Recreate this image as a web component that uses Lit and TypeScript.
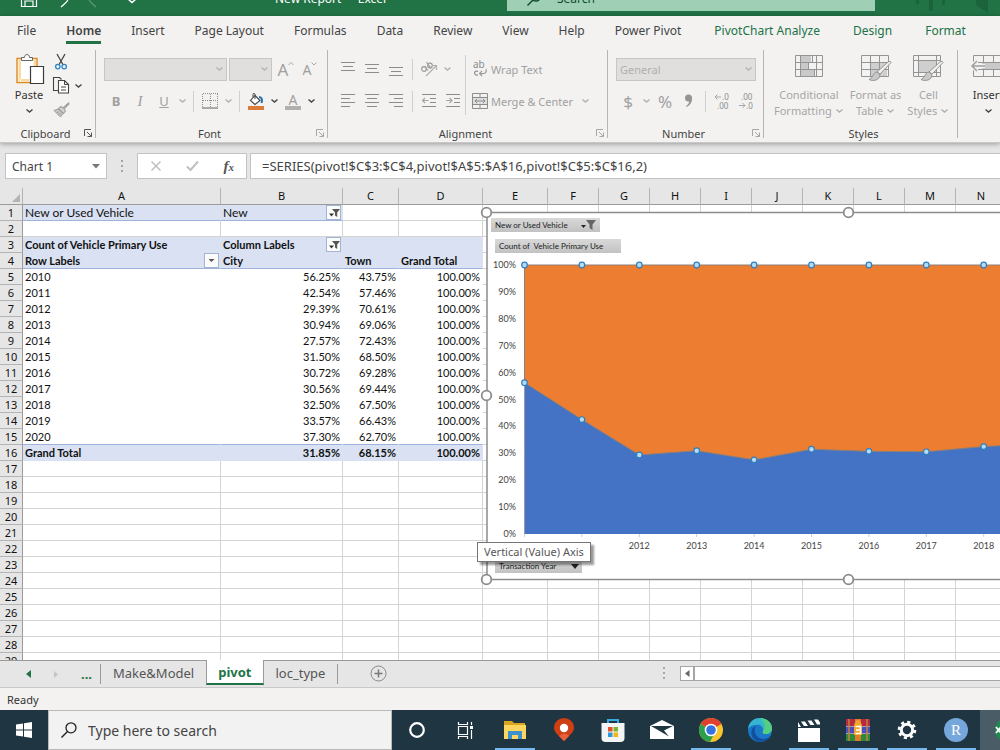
import { LitElement, html, css, svg, nothing, TemplateResult } from "lit";
import { customElement } from "lit/decorators.js";
import { classMap } from "lit/directives/class-map.js";

const GREY = "#a6a6a6";
const icon = (w: number, h: number, body: unknown) =>
  html`<svg class="ico" width=${w} height=${h} viewBox="0 0 ${w} ${h}" fill="none" aria-hidden="true">${body}</svg>`;

const chevron = (color = "#b0b0b0") =>
  icon(9, 6, svg`<path d="M1.5 1.5 4.5 4 7.5 1.5" stroke=${color} stroke-width="1.4"/>`);
const launcher = (color: string) =>
  icon(10, 10, svg`<path d="M1.5 8V1.5H8M4 4l4.5 4.5M8.5 4.5v4h-4" stroke=${color}/>`);
const lines = (ws: number[], align: "l" | "c" | "r", shift = 0) =>
  icon(16, 16, svg`${ws.map((w, i) => {
    const x = align === "l" ? 1 : align === "r" ? 15 - w : 8 - w / 2;
    return svg`<path d="M${x} ${(16 - (ws.length - 1) * 4) / 2 - 0.5 + shift + i * 4}h${w}" stroke="#8c8c8c"/>`;
  })}`);
const funnel = icon(12, 10, svg`<path d="M4 1h8L9.200 4.500V9L7 7.500V4.500Z" fill="#555"/><path d="M1 5.500h5L3.500 8.500Z" fill="#333"/>`);

const ICONS = {
  save: icon(18, 18, svg`<path d="M1.500 1.500h13l2 2v13h-15Z M5 16v-5h8v5 M5 2v5h7V2" stroke="#fff" stroke-width="1.200"/>`),
  undo: icon(18, 18, svg`<path d="M3 2v6h6M3 8c4-6 12-4 12 1 0 3-4 5-7 8" stroke="#fff" stroke-width="1.300"/>`),
  redo: icon(18, 18, svg`<path d="M15 2v6H9M15 8C11 2 3 4 3 9c0 3 4 5 7 8" stroke="#5b9876" stroke-width="1.300"/>`),
  search: icon(16, 16, svg`<circle cx="10" cy="5.500" r="4.500" stroke="#0e4a2a" stroke-width="1.300"/><path d="M7 9 1.500 14.500" stroke="#0e4a2a" stroke-width="1.400"/>`),
  paste: icon(32, 32, svg`<path d="M4 5.500h20v24H4Z" fill="#fff" stroke="#e08a1e" stroke-width="1.400"/><path d="M5.500 7v21h2.500V7Zm15 0h2.500v6h-2.500ZM7 26h9v2H7Z" fill="#fbd9a0"/><path d="M8.500 7.500v-3h3c0-4 5-4 5 0h3v3Z" fill="#f9f9f9" stroke="#666"/><path d="M17.500 13.500h13v17h-13Z" fill="#fff" stroke="#3b3b3b" stroke-width="1.200"/>`),
  cut: icon(14, 17, svg`<path d="M3 1l6.200 11M11 1 4.800 12" stroke="#444" stroke-width="1.300"/><circle cx="3.800" cy="13.600" r="2.200" stroke="#2b88c4" stroke-width="1.300"/><circle cx="10.200" cy="13.600" r="2.200" stroke="#2b88c4" stroke-width="1.300"/>`),
  copy: icon(18, 17, svg`<path d="M6.500 13.500h-5v-13h6l2 2" stroke="#444" stroke-width="1.100"/><path d="M6.500 3.500h6l4 4v8.500h-10Z" fill="#fff" stroke="#444" stroke-width="1.100"/><path d="M12.500 3.500v4h4M9 10h5M9 13h5" stroke="#444"/>`),
  brush: icon(17, 16, svg`<path d="M15.500 1 10 6 8 4.500 5.500 6.500l5 5 2-2.500-1.500-2L16 2Z" fill="#d5d5d5" stroke="#a0a0a0" stroke-width="1.100"/><path d="M5 7 1 8.500l6.500 6.500 2.500-3.500ZM3.500 11l2-1M5.500 13l2-1.500" fill="#c4c4c4" stroke="#a0a0a0"/>`),
  border: icon(16, 16, svg`<path d="M1 .5h15M1 7.500h15M.5 1v13M8.500 1v13M15.500 1v13" stroke="#8f8f8f" stroke-dasharray="1 1"/><path d="M0 15h16" stroke="#8a8a8a" stroke-width="1.400"/>`),
  fill: icon(18, 17, svg`<path d="M8 2.500 13 7.500 8 11.500 3.500 7.500Z" fill="#fff" stroke="#444" stroke-width="1.100"/><path d="M8 6V1.500c0-1.500-2-1.500-2 0v2.500" stroke="#444"/><path d="M12 4c3 0 3.500 3 2.500 6" stroke="#1f6fb5" stroke-width="2"/><path d="M1 13h16v4H1Z" fill="#d97b3a"/>`),
  orient: icon(18, 18, svg`<circle cx="4" cy="9" r="2.300" stroke="#9c9c9c" stroke-width="1.200"/><path d="M4.500 6 8 10.500M6.500 2 11 8.500" stroke="#9c9c9c" stroke-width="1.200"/><circle cx="10" cy="5.500" r="2.300" stroke="#9c9c9c" stroke-width="1.200"/><path d="M6 16 16 6M12 5.500h4.500V10" stroke="#b0b0b0" stroke-width="1.200"/>`),
  indentL: icon(16, 16, svg`<path d="M1 1.500h14M9 5.500h6M9 9.500h6M1 13.500h14" stroke="#8c8c8c"/><path d="M7.500 7.500H2M4 5 1.500 7.500 4 10" stroke="#a6a6a6" stroke-width="1.200"/>`),
  indentR: icon(16, 16, svg`<path d="M1 1.500h14M9 5.500h6M9 9.500h6M1 13.500h14" stroke="#8c8c8c"/><path d="M1 7.500h5.500M4.500 5 7 7.500 4.500 10" stroke="#a6a6a6" stroke-width="1.200"/>`),
  wrap: icon(16, 18, svg`<text x="1" y="8" font-size="10" fill="#8c8c8c">ab</text><path d="M6 11.500c-4-2-5 4.500 0 3.500" stroke="#8c8c8c" stroke-width="1.200"/><path d="M14 9c1 4-1 5-6 4.500M10 11l-2.500 2.500L10 16" stroke="#9a9a9a" stroke-width="1.100"/>`),
  merge: icon(16, 16, svg`<path d="M.5.500h15v15H.5ZM.5 4.500h15M.5 11.500h15M8 .5v4M8 11.500v4" stroke="#8c8c8c"/><path d="M1 5h14v6H1Z" fill="#dedede"/><path d="M3 8h10M5 6 3 8l2 2M11 6l2 2-2 2" stroke="#8c8c8c"/>`),
  comma: icon(10, 14, svg`<circle cx="4.500" cy="4" r="3.500" fill="#949494"/><path d="M8 3.500c.5 4-1.500 7.500-5.500 9.500L2 12c2.500-1.500 3.500-3.500 3-6Z" fill="#949494"/>`),
  decInc: icon(17, 18, svg`<text x="8" y="8" font-size="8" fill="#8c8c8c">.0</text><text x="3" y="17" font-size="8" fill="#8c8c8c">.00</text><path d="M7 5H1M3.500 2.500 1 5l2.500 2.500" stroke="#a6a6a6"/>`),
  decDec: icon(17, 18, svg`<text x="3" y="8" font-size="8" fill="#8c8c8c">.00</text><text x="8" y="17" font-size="8" fill="#8c8c8c">.0</text><path d="M1 13.500h6M4.500 11 7 13.500 4.500 16" stroke="#a6a6a6"/>`),
  cond: icon(30, 28, svg`<path d="M7 1h10v7H7ZM7 8h7v7H7ZM7 15h13v7H7Z" fill="#c9c9c9"/><path d="M1.500 1.500h27v21h-27ZM1.500 8.500h27M1.500 15.500h27M6.500 1v21M22.500 1v21M14.500 8v7M18.500 1v7M20.500 15v7" stroke="#949494"/>`),
  fmtTable: icon(32, 28, svg`<path d="M10 9h17v13H10Z" fill="#cfcfcf"/><path d="M1.500 1.500h27v21h-27ZM1.500 8.500h27M1.500 15.500h27M10.500 1v21M19.500 1v21" stroke="#949494"/><path d="M31 8.500 20 20l-3-2L28 8c1.500-1 3-.5 3 .5Z" fill="#f3f2f1" stroke="#949494"/><path d="M17 18c-4 0-3 5-8 7.500 4 2 11 1 11-5Z" fill="#c9c9c9" stroke="#949494"/>`),
  cellStyle: icon(32, 28, svg`<path d="M6 6h18v12H6Z" fill="#cfcfcf"/><path d="M1.500 1.500h27v21h-27ZM1.500 6.500h27M1.500 18.500h27M6.500 1v21M24.500 1v21" stroke="#949494"/><path d="M31 8.500 20 20l-3-2L28 8c1.500-1 3-.5 3 .5Z" fill="#f3f2f1" stroke="#949494"/><path d="M17 18c-4 0-3 5-8 7.500 4 2 11 1 11-5Z" fill="#c9c9c9" stroke="#949494"/>`),
  insert: icon(36, 28, svg`<path d="M3.500 1.500h32v21h-32ZM3.500 8.500h32M3.500 15.500h32M13.500 1v7M23.500 1v21M13.500 15v7" stroke="#949494"/><path d="M12 9h24v6H12Z" fill="#c9c9c9"/><path d="M15 12H2M7 7l-5 5 5 5" stroke="#f3f2f1" stroke-width="4"/><path d="M15 12H2M7 7l-5 5 5 5" stroke="#a0a0a0" stroke-width="1.500"/>`),
};

const disabledBtn = (label: string, body: unknown, cls = "w24") =>
  html`<button class="tool ${cls}" aria-label=${label}>${body}</button>`;
const combo = (label: string, value: string, cls: string) =>
  html`<span class="combo ${cls}"><select aria-label=${label}><option>${value}</option></select>${chevron("#b4b4b4")}</span>`;

const TABS = ["File", "Home", "Insert", "Page Layout", "Formulas", "Data", "Review", "View", "Help", "Power Pivot", "PivotChart Analyze", "Design", "Format"];

const DATA: [string, string, string][] = [
  ["2010", "56.25%", "43.75%"], ["2011", "42.54%", "57.46%"], ["2012", "29.39%", "70.61%"],
  ["2013", "30.94%", "69.06%"], ["2014", "27.57%", "72.43%"], ["2015", "31.50%", "68.50%"],
  ["2016", "30.72%", "69.28%"], ["2017", "30.56%", "69.44%"], ["2018", "32.50%", "67.50%"],
  ["2019", "33.57%", "66.43%"], ["2020", "37.30%", "62.70%"],
];
const COLS = "ABCDEFGHIJKLMN".split("");

@customElement("pivot-chart")
class PivotChart extends LitElement {
  static styles = css`
    :host { display: block; font-family: Lato, sans-serif; }
    svg { display: block; }
    .axis { font-size: 9px; fill: #444; }
    .field {
      position: absolute; display: flex; align-items: center; justify-content: space-between;
      box-sizing: border-box; border: 0; padding: 0 3px 0 4px; height: 14px;
      background: linear-gradient(#d9d9d9, #c2c2c2); color: #222; font: 8px Lato, sans-serif; white-space: nowrap;
    }
    .filter { left: 11px; top: 13px; width: 109px; }
    .value { left: 15px; top: 34px; width: 126px; }
    .year { left: 15px; top: 354px; width: 87px; }
    .tip {
      position: absolute; left: -3px; top: 337px; box-sizing: border-box; height: 20px; padding: 0 6px;
      border: 1px solid #767676; background: #fff; color: #575757; box-shadow: 3px 3px 2px #0006;
      font: 11px/18px "Noto Sans", sans-serif; white-space: nowrap;
    }
  `;
  render() {
    const x = (i: number) => 44.5 + 57.4 * i;
    const y = (v: number) => 329 - 2.69 * v;
    const city = DATA.map((d) => parseFloat(d[1]));
    const edge = city.map((v, i) => `${x(i)} ${y(v)}`).join(" L");
    const end = x(city.length - 1);
    return html`
      <svg width="736" height="384" viewBox="0 0 736 384" role="img" aria-label="Vehicle primary use by year">
        <rect x="7" y="7.500" width="722" height="367" fill="#fff" stroke="#8c8c8c" stroke-width="1.500" />
        <path d="M44.500 60H${end}V329H44.500Z" fill="#ed7d31" />
        <path d="M${edge} V329H44.500Z" fill="#4472c4" />
        <path d="M${edge} V60H44.500Z" stroke="#8b8078" fill="none" />
        ${Array.from({ length: 11 }, (_, i) => svg`<text class="axis" text-anchor="end" x="36" y=${332 - i * 26.9}>${i * 10}%</text>`)}
        ${DATA.map((d, i) => svg`<path d="M${x(i)} 329v3" stroke="#d0d0d0"/>${i > 1 ? svg`<text class="axis" text-anchor="middle" x=${x(i)} y="344">${d[0]}</text>` : ""}`)}
        ${city.map((v, i) => [60, y(v)].map((cy) => svg`<circle cx=${x(i)} cy=${cy} r="2.800" fill="#b4dcf8" stroke="#2f7fbf" stroke-width="1.200"/>`))}
        ${[[6.5, 7.5], [368.5, 7.5], [6.5, 190.5], [6.5, 374.5], [368.5, 374.5]].map(([cx, cy]) =>
          svg`<circle cx=${cx} cy=${cy} r="4.800" fill="#fff" stroke="#8c8c8c" stroke-width="1.800"/>`)}
      </svg>
      <button class="field filter">New or Used Vehicle
        <svg width="16" height="10" viewBox="0 0 16 10"><path d="M5 0h10L11.500 4.500V10L8.500 8V4.500Z" fill="#666"/><path d="M0 5h5L2.500 8Z" fill="#222"/></svg></button>
      <button class="field value">Count of &nbsp;Vehicle Primary Use</button>
      <button class="field year">Transaction Year
        <svg width="8" height="5" viewBox="0 0 8 5"><path d="M0 0h8L4 5Z" fill="#222"/></svg></button>
      <div class="tip" role="tooltip">Vertical (Value) Axis</div>
    `;
  }
}

@customElement("excel-ribbon")
class ExcelRibbon extends LitElement {
  static styles = css`
    :host { display: block; background: #f3f2f1; font: 12px "Noto Sans", sans-serif; color: #444; border-bottom: 1px solid #c8c8c8; box-shadow: 0 1px 5px #0005; position: relative; }
    button { font: inherit; color: inherit; background: none; border: 0; padding: 0; }
    .ico { display: block; flex: none; font-family: "Noto Sans", sans-serif; }
    .tabs { display: flex; gap: 30px; padding-left: 17px; height: 32px; overflow: hidden; }
    .tab { flex: none; height: 28px; padding-top: 4px; box-sizing: border-box; border-bottom: 3px solid transparent; white-space: nowrap; }
    .tab.on { font-weight: 600; border-color: #217346; }
    .tab.ctx { color: #217346; margin-left: 3px; }
    .groups { display: flex; height: 94px; overflow: hidden; font-size: 11px; }
    .group { flex: none; display: flex; flex-direction: column; box-sizing: border-box; padding: 2px 0 0 8px; position: relative; }
    .group::after { content: ""; position: absolute; right: 0; top: 2px; height: 88px; width: 1px; background: #b5b5b5; }
    .g1 { width: 96px; } .g2 { width: 232px; } .g3 { width: 280px; } .g4 { width: 156px; } .g5 { width: 194px; } .g6 { width: 200px; }
    .body { flex: 1; display: flex; }
    .foot { display: flex; align-items: center; height: 16px; margin-bottom: 1px; padding-right: 3px; }
    .foot span { flex: 1; text-align: center; }
    .stack { display: flex; flex-direction: column; }
    .row { display: flex; align-items: center; height: 32px; }
    .row.first { padding-top: 3px; }
    .tool { display: flex; align-items: center; justify-content: center; height: 24px; color: #a0a0a0; white-space: nowrap; }
    .w24 { width: 24px; } .w12 { width: 13px; } .w18 { width: 18px; }
    .text { gap: 3px; }
    .sep { width: 1px; height: 21px; margin: 0 4px; background: #d0d0d0; flex: none; }
    .tall { width: 1px; height: 60px; margin: 5px 6px 0 0; background: #d0d0d0; }
    .big { display: flex; flex-direction: column; align-items: center; line-height: 16px; color: #a6a6a6; white-space: nowrap; }
    .big.live { color: #333; }
    .lbl { display: flex; align-items: center; gap: 3px; min-height: 16px; }
    .paste { width: 42px; gap: 2px; padding-top: 3px; }
    .paste .ico:last-child { margin-top: 3px; }
    .clip { gap: 1px; padding-left: 2px; }
    .clip .line { display: flex; align-items: center; gap: 4px; height: 23px; }
    .combo { display: grid; align-items: center; margin-right: 2px; }
    .combo > * { grid-area: 1 / 1; }
    .combo .ico { justify-self: end; margin-right: 3px; pointer-events: none; }
    select { appearance: none; box-sizing: border-box; width: 100%; height: 23px; padding: 0 3px; border: 1px solid #c6c6c6; border-radius: 0; background: #e1dfdd; color: #b0aeac; font: 11px "Noto Sans", sans-serif; }
    .c1 { width: 123px; } .c2 { width: 43px; } .c3 { width: 140px; }
    .glyph { font-size: 13px; } .big-a { font-size: 17px; } .small-a { font-size: 14px; }
    .bold { font-weight: 700; } .ital { font-style: italic; font-family: "Liberation Serif", serif; font-size: 15px; } .und { text-decoration: underline; }
    .num { font-size: 17px; }
    .fontcolor { display: flex; flex-direction: column; align-items: center; line-height: 13px; font-size: 14px; border-bottom: 4px solid #b0b0b0; width: 16px; }
    .styles { padding: 4px 0 0 2px; gap: 6px; }
    .ins { padding: 4px 0 0 4px; }
    .styles .big, .ins .big { justify-content: flex-start; }
    .styles .big > .ico, .ins .big > .ico { margin-bottom: 5px; }
  `;
  render() {
    const caret = (label: string, c?: string) => disabledBtn(label, chevron(c), "w12");
    return html`
      <nav class="tabs">
        ${TABS.map((t, i) => html`<button class=${classMap({ tab: true, on: i === 1, ctx: i > 9 })}>${t}</button>`)}
      </nav>
      <div class="groups">
        <section class="group g1">
          <div class="body">
            <button class="big live paste">${ICONS.paste}<span>Paste</span>${chevron("#444")}</button>
            <div class="stack clip">
              <div class="line">${disabledBtn("Cut", ICONS.cut, "w18")}</div>
              <div class="line">${disabledBtn("Copy", ICONS.copy, "w18")}${chevron("#444")}</div>
              <div class="line">${disabledBtn("Format Painter", ICONS.brush, "w18")}</div>
            </div>
          </div>
          <div class="foot"><span>Clipboard</span>${launcher("#555")}</div>
        </section>
        <section class="group g2">
          <div class="body stack">
            <div class="row first">
              ${combo("Font", "", "c1")}${combo("Font size", "", "c2")}
              ${disabledBtn("Increase font size", html`<span class="big-a">A</span>${icon(6, 16, svg`<path d="M.5 4 3 1.500 5.500 4" stroke="#a6a6a6"/>`)}`, "w24")}
              ${disabledBtn("Decrease font size", html`<span class="small-a">A</span>${icon(6, 16, svg`<path d="M.5 1.500 3 4 5.500 1.500" stroke="#a6a6a6"/>`)}`, "w24")}
            </div>
            <div class="row">
              ${disabledBtn("Bold", html`<span class="glyph bold">B</span>`)}
              ${disabledBtn("Italic", html`<span class="ital">I</span>`)}
              ${disabledBtn("Underline", html`<span class="glyph und">U</span>`)}
              ${caret("Underline styles")}<i class="sep"></i>
              ${disabledBtn("Borders", ICONS.border)}${caret("Border styles")}<i class="sep"></i>
              ${disabledBtn("Fill colour", ICONS.fill)}${caret("Fill colours", "#444")}
              ${disabledBtn("Font colour", html`<span class="fontcolor">A</span>`)}${caret("Font colours", "#444")}
            </div>
          </div>
          <div class="foot"><span>Font</span>${launcher(GREY)}</div>
        </section>
        <section class="group g3">
          <div class="body">
            <div class="stack">
              <div class="row first">
                ${disabledBtn("Top align", lines([14, 10, 14], "c", -2))}${disabledBtn("Middle align", lines([14, 10, 14], "c"))}${disabledBtn("Bottom align", lines([14, 10, 14], "c", 3))}
                <i class="sep"></i>${disabledBtn("Orientation", ICONS.orient)}${caret("Orientations")}
              </div>
              <div class="row">
                ${disabledBtn("Align left", lines([14, 9, 14, 9], "l"))}${disabledBtn("Centre", lines([14, 10, 14, 10], "c"))}${disabledBtn("Align right", lines([14, 9, 14, 9], "r"))}
                <i class="sep"></i>${disabledBtn("Decrease indent", ICONS.indentL)}${disabledBtn("Increase indent", ICONS.indentR)}
              </div>
            </div>
            <i class="tall"></i>
            <div class="stack">
              <div class="row first"><button class="tool text">${ICONS.wrap}Wrap Text</button></div>
              <div class="row"><button class="tool text">${ICONS.merge}Merge &amp; Center</button>${disabledBtn("Merge options", chevron(), "w24")}</div>
            </div>
          </div>
          <div class="foot"><span>Alignment</span>${launcher(GREY)}</div>
        </section>
        <section class="group g4">
          <div class="body stack">
            <div class="row first">${combo("Number format", "General", "c3")}</div>
            <div class="row">
              ${disabledBtn("Currency", html`<span class="num">$</span>`)}${caret("Currencies")}
              ${disabledBtn("Percent", html`<span class="num">%</span>`)}
              ${disabledBtn("Comma", ICONS.comma)}
              <i class="sep"></i>${disabledBtn("Increase decimal", ICONS.decInc)}${disabledBtn("Decrease decimal", ICONS.decDec)}
            </div>
          </div>
          <div class="foot"><span>Number</span>${launcher(GREY)}</div>
        </section>
        <section class="group g5">
          <div class="body styles">
            ${([[ICONS.cond, "Conditional", "Formatting"], [ICONS.fmtTable, "Format as", "Table"], [ICONS.cellStyle, "Cell", "Styles"]] as [TemplateResult, string, string][]).map(
              ([ic, a, b]) => html`<button class="big">${ic}<span>${a}</span><span class="lbl">${b} ${chevron()}</span></button>`)}
          </div>
          <div class="foot"><span>Styles</span></div>
        </section>
        <section class="group g6">
          <div class="body ins"><button class="big live">${ICONS.insert}<span>Insert</span><span class="lbl">${chevron("#444")}</span></button></div>
        </section>
      </div>
    `;
  }
}

@customElement("task-bar")
class TaskBar extends LitElement {
  static styles = css`
    :host { display: flex; height: 40px; background: #1f3541; overflow: hidden; }
    button { flex: none; display: flex; align-items: center; justify-content: center; border: 0; padding: 0; background: none; }
    .start { width: 48px; }
    .box { flex: none; display: flex; align-items: center; gap: 11px; box-sizing: border-box; width: 344px; padding-left: 12px; background: #f2f2f2; border: 1px solid #b9b9b9; }
    .box input { flex: 1; min-width: 0; border: 0; outline: 0; background: none; padding: 0; font: 14px "Noto Sans", sans-serif; color: #444; }
    .box input::placeholder { color: #444; opacity: 1; }
    .app { width: 49px; }
    .run { background: linear-gradient(#76b9ed, #76b9ed) center bottom / 40px 2px no-repeat; }
    .active { background: #4a5d67; }
  `;
  render() {
    const apps: [string, boolean, unknown][] = [
      ["Cortana", false, svg`<circle cx="13" cy="13" r="6.800" stroke="#fff" stroke-width="2.200"/>`],
      ["Task View", false, svg`<path d="M5.500 9.500h9v8h-9ZM5.500 5v2.500h9V5M5.500 22v-2.500h9V22M18.500 5v3M18.500 13v9" stroke="#fff" stroke-width="1.200"/><path d="M17 9h3v3h-3Z" fill="#fff"/>`],
      ["File Explorer", true, svg`<path d="M2 4h8l2 2h11v16H2Z" fill="#d9a520"/><path d="M2 8h22v14H2Z" fill="#fbd75f"/><path d="M6 22v-8h14v8h-4v-4h-6v4Z" fill="#3e8fcf"/>`],
      ["Maps", false, svg`<path d="M13 24C7 18 3 15 3 10.500a10 9.500 0 0 1 20 0C23 15 19 18 13 24Z" fill="#cf3f14"/><path d="M8 19c4-3 8-3 10 0l-5 5Z" fill="#e8603a"/><circle cx="13" cy="11" r="4.200" fill="#fff"/>`],
      ["Store", false, svg`<path d="M8 7V3h10v4" stroke="#38a9df" stroke-width="2"/><path d="M1.500 6h23v15q0 4-4 4h-15q-4 0-4-4Z" fill="#f2f4f5"/><path d="M8 10h4.500v4.500H8Z" fill="#e04e2a"/><path d="M13.500 10H18v4.500h-4.500Z" fill="#7cb52c"/><path d="M8 15.500h4.500V20H8Z" fill="#2a9bd8"/><path d="M13.500 15.500H18V20h-4.500Z" fill="#f4b51c"/>`],
      ["Mail", false, svg`<path d="M1 9 13 3l12 6v13H1Z" fill="#fff"/><path d="M2 9h22l-9 4.500 5 6L2 9Z" fill="#1f3541"/>`],
      ["Chrome", true, svg`<circle cx="13" cy="13" r="12" fill="#f7c52b"/><path d="M13 13 2.600 7A12 12 0 0 1 23.400 7Z" fill="#e0412f"/><path d="M13 13 2.600 7a12 12 0 0 0 9.400 18l4.500-9Z" fill="#2c9f4c"/><circle cx="13" cy="13" r="6.300" fill="#fff"/><circle cx="13" cy="13" r="4.800" fill="#3573e0"/>`],
      ["Edge", false, svg`<circle cx="13" cy="13" r="12" fill="#1a78c8"/><path d="M1 12C2 4 8 1 13 1c7 0 12 5 12 10 0 4-3 6-6 6-3 0-4-1-3-3 1-4-3-7-7-6-4 0-7 2-8 4Z" fill="#34b6d0"/><path d="M13 1c7 0 12 5 12 10 0 4-3 6-6 6-3 0-4-1-3-3 3-4 2-9-3-13Z" fill="#55cf7f"/><path d="M9 9c-3 4-1 12 7 13 3 0 5-1 7-3-3 6-10 7-15 4-5-4-5-12 1-14Z" fill="#124f9c"/>`],
      ["Movies", true, svg`<path d="M2 11h22v14H2Z" fill="#fff"/><path d="M2 5l3 5h-3ZM5 4.500h4l3 4.500H8ZM11.500 3.500h4l3 4.500h-4ZM18 2.500h4l2 3v2h-3Z" fill="#fff"/>`],
      ["WinRAR", true, svg`<path d="M1 2h24v7H1Z" fill="#b52942"/><path d="M1 10h24v6H1Z" fill="#4a4fc0"/><path d="M1 17h24v7H1Z" fill="#2c8a3c"/><path d="M1 9.500h24M1 16.500h24" stroke="#a89ab0"/><path d="M4 2v22M22 2v22" stroke="#c8803a" stroke-width="1.500"/><path d="M10 2h6v22h-6Z" fill="#df7d27"/><path d="M9 8q4-10 8 0v10H9Z" fill="#f2a52c"/><path d="M10.500 9.500h5v7h-5M11 13h4" stroke="#fff" stroke-width="1.500"/>`],
      ["Settings", true, svg`<circle cx="13" cy="13" r="5.700" stroke="#fff" stroke-width="3"/><circle cx="13" cy="13" r="8" stroke="#fff" stroke-width="2.600" stroke-dasharray="3.140 3.140"/>`],
      ["R", true, svg`<circle cx="13" cy="13" r="12" fill="#75a7dc"/><text x="13" y="18" text-anchor="middle" font-family="Liberation Serif" font-size="15" fill="#fff">R</text>`],
      ["Excel", false, svg`<circle cx="15" cy="13" r="12" fill="#1d8a4e"/><path d="M4 10l5 6M9 10l-5 6" stroke="#fff" stroke-width="1.800"/>`],
    ];
    return html`
      <button class="start" aria-label="Start"><svg width="16" height="16" viewBox="0 0 16 16"><path d="M0 2.500 7 1.500V7.500H0ZM8 1.300 16 0v7.500H8ZM0 8.500h7v6L0 13.500ZM8 8.500h8V16L8 14.700Z" fill="#fff"/></svg></button>
      <label class="box"><svg width="16" height="16" viewBox="0 0 16 16" fill="none"><circle cx="10" cy="5.800" r="5" stroke="#222" stroke-width="1.300"/><path d="M6.500 9.500 .5 15.500" stroke="#222" stroke-width="1.400"/></svg>
        <input placeholder="Type here to search" aria-label="Type here to search" /></label>
      ${apps.map(([n, run, body]) => html`<button class=${classMap({ app: true, run, active: n === "Excel" })} aria-label=${n}><svg width="26" height="26" viewBox="0 0 26 26" fill="none">${body}</svg></button>`)}
    `;
  }
}

@customElement("app-root")
class AppRoot extends LitElement {
  static styles = css`
    :host { display: flex; flex-direction: column; height: 100vh; overflow: hidden; background: #e6e6e6; font: 12px "Noto Sans", sans-serif; color: #333; }
    button { font: inherit; color: inherit; background: none; border: 0; padding: 0; }
    .ico { display: block; flex: none; }
    .title { flex: none; display: flex; align-items: flex-end; height: 16px; overflow: hidden; background: #217346; color: #fff; position: relative; }
    .bar { flex: 1; display: grid; grid-template-columns: 507px minmax(0, 368fr) minmax(0, 125fr); align-items: center; height: 35px; }
    .quick { display: flex; align-items: center; gap: 15px; padding-left: 20px; }
    .quick b { font-weight: 400; margin-left: 123px; }
    .quick button { width: 18px; }
    .find { display: flex; align-items: center; gap: 15px; height: 25px; padding-left: 19px; background: #9fcfb4; }
    .find input { flex: 1; min-width: 0; border: 0; padding: 0; outline: 0; background: none; font: inherit; }
    .find input::placeholder { color: #0e4a2a; opacity: 1; }
    .deco { justify-self: end; }
    excel-ribbon { flex: none; z-index: 1; }
    .formula { flex: none; display: flex; align-items: stretch; height: 26px; padding: 10px 0 9px 5px; }
    .fbox { display: flex; align-items: center; box-sizing: border-box; border: 1px solid #c3c3c3; background: #fff; }
    .fbox input { width: 100%; min-width: 0; border: 0; outline: 0; padding: 0; background: none; color: #444; font: 13px "Noto Sans", sans-serif; }
    .name { width: 102px; padding: 0 6px; }
    .name input { font-size: 12px; }
    .grip { display: flex; align-items: center; justify-content: center; width: 30px; }
    .fx { width: 110px; justify-content: space-around; }
    .fx i { font: italic 700 15px "Liberation Serif", serif; color: #555; }
    .fx small { font-size: 11px; }
    .expr { flex: 1; margin-left: 3px; padding-left: 11px; border-right: 0; }
    .sheet { flex: 1; min-height: 0; position: relative; overflow: hidden; background: #fff; border-bottom: 1px solid #9a9a9a; }
    table { border-collapse: separate; border-spacing: 0; table-layout: fixed; width: 1006px; font: 11px/15px Lato, sans-serif; color: #111; }
    th, td { box-sizing: border-box; height: 16px; padding: 0 2px; border: solid #d4d4d4; border-width: 0 1px 1px 0; white-space: nowrap; text-align: left; overflow: hidden; }
    th { background: #e6e6e6; font: 11px/15px "Noto Sans", sans-serif; text-align: center; padding: 0; border-color: #b4b4b4; }
    thead th { height: 17px; line-height: 16px; border-bottom-color: #9b9b9b; }
    tbody th { border-right-color: #9b9b9b; }
    .ch { width: 23px; } .ca { width: 198px; } .cb { width: 122px; } .cc { width: 56px; } .cd { width: 84px; } .ce { width: 65px; } .cf { width: 51px; }
    .corner .ico { margin: 4px 1px 0 auto; }
    .plain { border-color: transparent; }
    .tint { background: #d9e1f2; border-color: #d9e1f2; }
    .under { border-bottom-color: #9db3dc; }
    .strong { font-weight: 700; }
    .wide { font-size: 12px; }
    .num { text-align: right; }
    .cell { display: flex; align-items: center; justify-content: space-between; height: 15px; margin-right: -1px; }
    .drop { display: flex; align-items: center; justify-content: center; box-sizing: border-box; width: 15px; height: 15px; border: 1px solid #a5b4d0; background: #fbfbfb; }
    pivot-chart { position: absolute; left: 480px; top: 17px; }
    .sheets { flex: none; display: flex; align-items: stretch; height: 27px; box-sizing: border-box; padding-bottom: 2px; font-size: 13px; color: #555; border-bottom: 1px solid #c9c9c9; }
    .nav { display: flex; align-items: center; justify-content: space-between; box-sizing: border-box; width: 101px; padding: 0 8px 0 26px; margin: 3px 0 1px; border-right: 1px solid #9a9a9a; color: #217346; font-weight: 700; line-height: 16px; }
    .sheet-tab { padding: 0 12px; }
    .sheet-tab.on { padding: 0 11px; background: #fff; color: #217346; font-weight: 700; border: solid #9a9a9a; border-width: 0 1px; border-bottom: 2px solid #217346; margin-top: -1px; position: relative; }
    .after { width: 1px; margin: 3px 0 1px; background: #9a9a9a; }
    .add { margin-left: 32px; }
    .fill { flex: 1; display: flex; justify-content: flex-end; align-items: center; padding-right: 14px; }
    .scroll { width: 320px; display: flex; margin: 5px 0 4px; box-sizing: border-box; border: 1px solid #a6a6a6; border-right: 0; background: #fff; }
    .scroll button { width: 14px; display: flex; align-items: center; justify-content: center; border-right: 2px solid #a6a6a6; }
    .status { flex: none; height: 22px; padding-left: 7px; background: #f3f2f1; font-size: 11px; line-height: 24px; }
    task-bar { flex: none; }
  `;

  private drop(on: boolean, label: string) {
    return html`<button class="drop" aria-label=${label}>${on ? funnel : icon(7, 4, svg`<path d="M.5 0h6L3.500 3Z" fill="#555"/>`)}</button>`;
  }
  private row(n: number) {
    const [a, b, c, d] = ["A", "B", "C", "D"];
    const cell: Record<string, unknown> = {};
    const cls: Record<string, string> = {};
    const tint = (s: string) => [a, b, c, d].forEach((k) => (cls[k] = s));
    if (n === 1) {
      cell.A = "New or Used Vehicle";
      cell.B = html`<div class="cell">New${this.drop(true, "Filter vehicles")}</div>`;
      cls.A = cls.B = "tint under wide";
    } else if (n === 3) {
      tint("tint strong");
      cell.A = "Count of Vehicle Primary Use";
      cell.B = html`<div class="cell">Column Labels${this.drop(true, "Filter columns")}</div>`;
    } else if (n === 4) {
      tint("tint under strong");
      cell.A = html`<div class="cell">Row Labels${this.drop(false, "Filter rows")}</div>`;
      [cell.B, cell.C, cell.D] = ["City", "Town", "Grand Total"];
    } else if (n > 4 && n < 16) {
      const s = n === 15 ? "plain under" : "plain";
      tint(s + " num");
      cls.A = s;
      [cell.A, cell.B, cell.C] = DATA[n - 5];
      cell.D = "100.00%";
    } else if (n === 16) {
      tint("tint strong num");
      cls.A = "tint strong";
      [cell.A, cell.B, cell.C, cell.D] = ["Grand Total", "31.85%", "68.15%", "100.00%"];
    }
    return html`<tr><th scope="row">${n}</th>${COLS.map((k) => html`<td class=${cls[k] ?? nothing}>${cell[k] ?? ""}</td>`)}</tr>`;
  }
  render() {
    const dots = icon(3, 13, svg`<path d="M0 1h2M0 6h2M0 11h2" stroke="#a6a6a6" stroke-width="2"/>`);
    return html`
      <header class="title"><div class="bar">
        <div class="quick">
          <button aria-label="Save">${ICONS.save}</button><button aria-label="Undo">${ICONS.undo}</button><button aria-label="Redo">${ICONS.redo}</button>
          <button aria-label="Customise">${icon(18, 12, svg`<path d="M9 6l4 3.500L17 6" stroke="#fff" stroke-width="1.500"/>`)}</button>
          <b>New Report &nbsp;- &nbsp;Excel</b>
        </div>
        <label class="find">${ICONS.search}<input placeholder="Search" aria-label="Search" /></label>
        <svg class="deco" width="90" height="34" viewBox="0 0 90 34" fill="#1b643b"><path d="M6 18h3v4H6ZM19 16h4v13h-4ZM32 18h3v5h-3ZM66 16h12v15l-12-8Z"/></svg>
      </div></header>
      <excel-ribbon></excel-ribbon>
      <div class="formula">
        <div class="fbox name"><input aria-label="Name box" .value=${"Chart 1"} />${icon(8, 5, svg`<path d="M0 0h8L4 4.500Z" fill="#777"/>`)}</div>
        <div class="grip">${dots}</div>
        <div class="fbox fx">
          <button aria-label="Cancel">${icon(12, 12, svg`<path d="M1.500 1.500 10.500 10.500M10.500 1.500 1.500 10.500" stroke="#c0c0c0" stroke-width="1.500"/>`)}</button>
          <button aria-label="Enter">${icon(13, 12, svg`<path d="M1 6.500 4.500 10 12 1.500" stroke="#c0c0c0" stroke-width="2"/>`)}</button>
          <button aria-label="Insert function"><i>f<small>x</small></i></button>
        </div>
        <div class="fbox expr"><input aria-label="Formula" .value=${"=SERIES(pivot!$C$3:$C$4,pivot!$A$5:$A$16,pivot!$C$5:$C$16,2)"} /></div>
      </div>
      <main class="sheet">
        <table>
          <colgroup><col class="ch" /><col class="ca" /><col class="cb" /><col class="cc" /><col class="cd" /><col class="ce" />${COLS.slice(5).map(() => html`<col class="cf" />`)}</colgroup>
          <thead><tr><th class="corner">${icon(9, 9, svg`<path d="M8 0v8H0Z" fill="#b4b4b4"/>`)}</th>${COLS.map((c) => html`<th scope="col">${c}</th>`)}</tr></thead>
          <tbody>${Array.from({ length: 29 }, (_, i) => this.row(i + 1))}</tbody>
        </table>
        <pivot-chart></pivot-chart>
      </main>
      <div class="sheets">
        <div class="nav">
          <button aria-label="Previous sheet">${icon(6, 8, svg`<path d="M5 0v8L0 4Z" fill="#217346"/>`)}</button>
          <button aria-label="Next sheet">${icon(6, 8, svg`<path d="M0 1v7L4 4.500Z" fill="#c4c4c4"/>`)}</button>
          <button aria-label="More sheets">...</button>
        </div>
        <button class="sheet-tab">Make&amp;Model</button>
        <button class="sheet-tab on">pivot</button>
        <button class="sheet-tab">loc_type</button>
        <i class="after"></i>
        <button class="add" aria-label="New sheet">${icon(17, 17, svg`<circle cx="8.500" cy="8.500" r="7.500" stroke="#8a8a8a"/><path d="M8.500 4.500v8M4.500 8.500h8" stroke="#777" stroke-width="1.500"/>`)}</button>
        <div class="fill">${dots}</div>
        <div class="scroll"><button aria-label="Scroll left">${icon(5, 8, svg`<path d="M4.500 0v7L0 3.500Z" fill="#666"/>`)}</button></div>
      </div>
      <footer class="status">Ready</footer>
      <task-bar></task-bar>
    `;
  }
}
